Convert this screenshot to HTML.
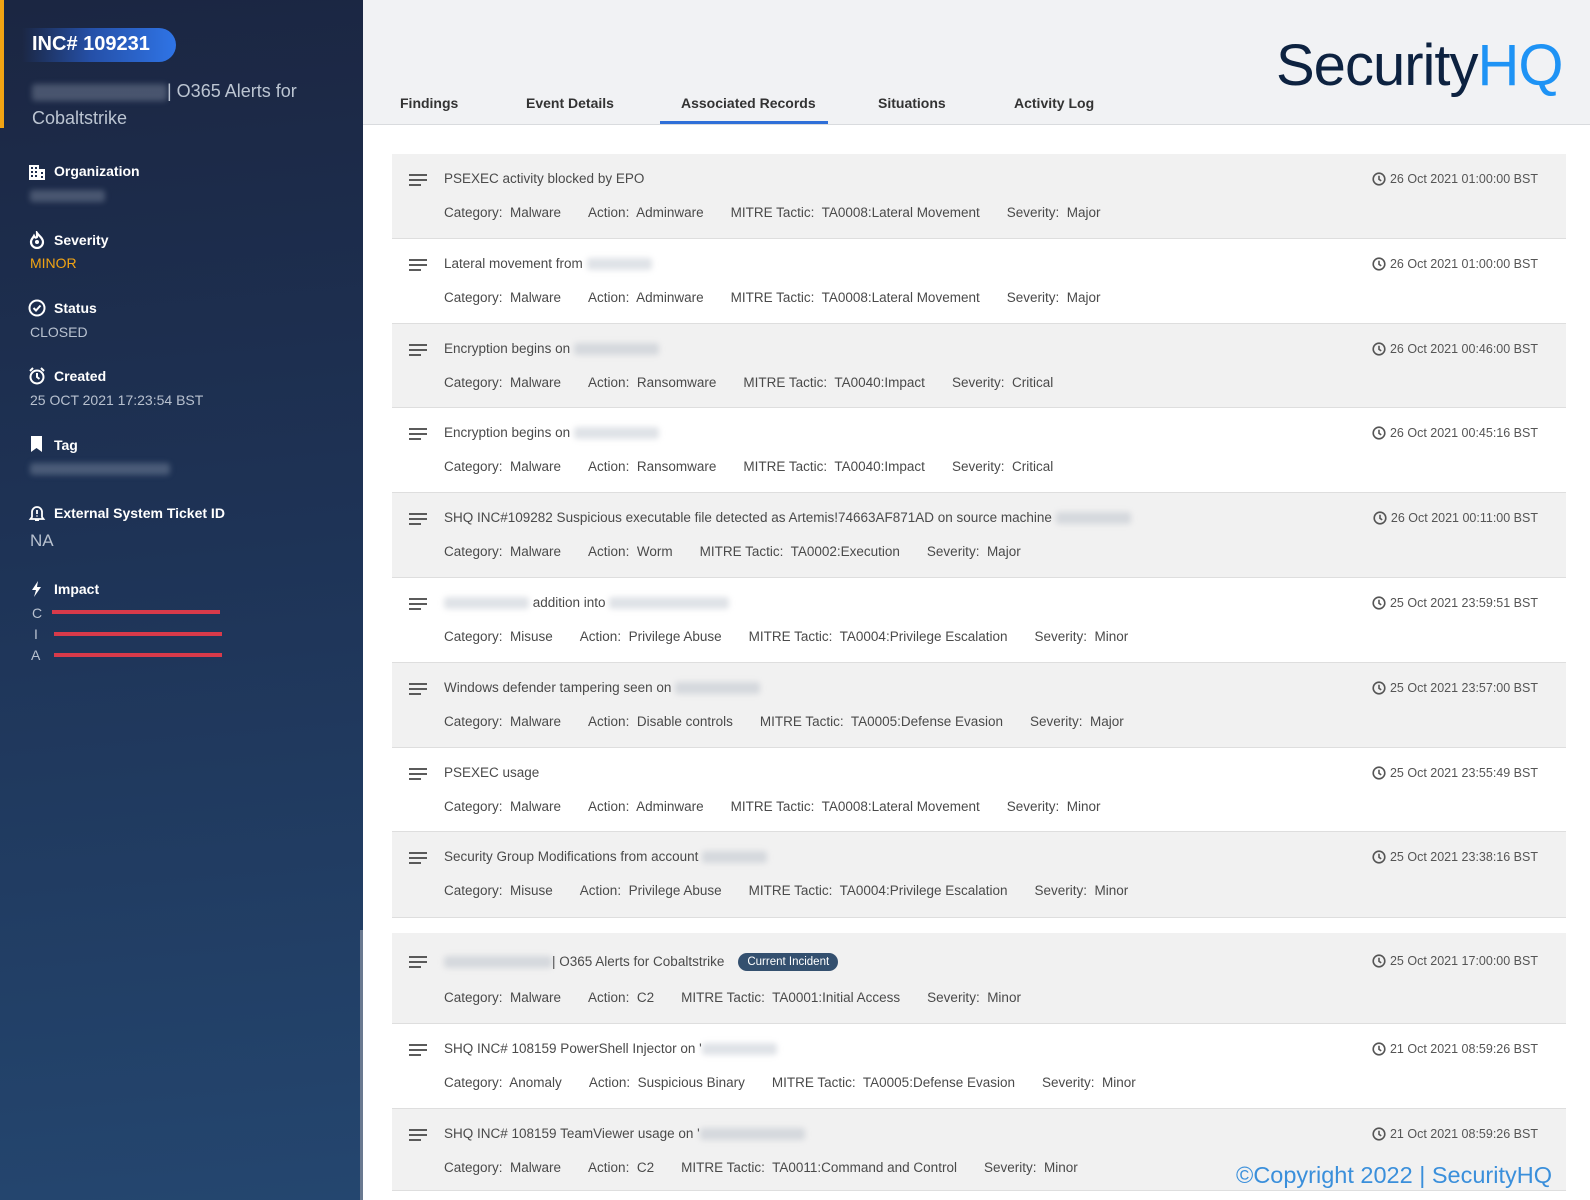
<!DOCTYPE html>
<html><head><meta charset="utf-8"><style>
*{margin:0;padding:0;box-sizing:border-box}
body{width:1590px;height:1200px;overflow:hidden;font-family:"Liberation Sans",sans-serif;background:#fff;position:relative}
#side{position:absolute;left:0;top:0;width:363px;height:1200px;background:linear-gradient(175deg,#1b2642 0%,#1e3356 45%,#24466f 100%)}
.orange{position:absolute;left:0;top:0;width:4px;height:128px;background:#f2a413}
.pill{position:absolute;left:22px;top:28px;width:154px;height:34px;border-radius:0 17px 17px 0;background:linear-gradient(90deg,rgba(27,38,66,0) 0%,#2550a8 45%,#2f74e6 100%)}
.pill span{position:absolute;left:10px;top:5px;color:#fff;font-weight:bold;font-size:20px}
.sub{position:absolute;left:32px;top:78px;color:#bcc5d2;font-size:18px;line-height:27px;width:300px}
.blur{display:inline-block;background:rgba(180,190,205,.3);filter:blur(3px);border-radius:3px;vertical-align:middle}
.lbl{position:absolute;left:54px;color:#fff;font-weight:bold;font-size:14px}
.ico{position:absolute;left:28px;width:18px;height:18px}
.val{position:absolute;left:30px;color:#b8c1cf;font-size:14px}
.bar{position:absolute;height:4px;background:#d83a4a;left:53px;width:168px}
#hdr{position:absolute;left:363px;top:0;right:0;height:125px;background:#f1f2f4;border-bottom:1px solid #d9dbde}
.tab{position:absolute;top:95px;font-size:14px;font-weight:bold;color:#333}
.logo{position:absolute;top:32px;font-size:58px;letter-spacing:-1px;color:#0d2240}
.logo b{font-weight:normal;color:#1e93f5}
.row{position:absolute;left:392px;width:1174px;border-bottom:1px solid #dedede}
.g{background:#f1f1f1}
.row .ham{position:absolute;left:17px;width:18px;height:12px}
.row .t{position:absolute;left:52px;font-size:13.5px;color:#4a4a4a;white-space:nowrap}
.row .c{position:absolute;left:52px;font-size:13.5px;color:#4a4a4a;white-space:nowrap}
.row .c span{margin-right:27px}
.row .ts{position:absolute;right:28px;font-size:12.5px;color:#555;white-space:nowrap}
.row .ts svg{vertical-align:-3px;margin-right:4px}
.badge{display:inline-block;background:#34506f;color:#fff;font-size:11.5px;padding:3px 9px;border-radius:11px;margin-left:14px;vertical-align:1px}
.copy{position:absolute;left:1236px;top:1162px;font-size:23.5px;color:#3a8fdb;white-space:nowrap}
.scroll{position:absolute;left:360px;top:930px;width:3px;height:270px;background:#6a7990}
</style></head><body>
<div id="side">
<div class="orange"></div>
<div class="pill"><span>INC# 109231</span></div>
<div class="sub"><span class="blur" style="width:135px;height:17px"></span>| O365 Alerts for Cobaltstrike</div>

<svg class="ico" style="top:163px" viewBox="0 0 18 18"><path fill="#fff" d="M1 2h10v15H1zM11 6h6v11h-6z"/><g fill="#1d2c4c"><rect x="3" y="4" width="2" height="2"/><rect x="7" y="4" width="2" height="2"/><rect x="3" y="8" width="2" height="2"/><rect x="7" y="8" width="2" height="2"/><rect x="3" y="12" width="2" height="2"/><rect x="7" y="12" width="2" height="2"/><rect x="13" y="9" width="2" height="2"/><rect x="13" y="13" width="2" height="2"/></g></svg>
<div class="lbl" style="top:163px">Organization</div>
<div class="val" style="top:187px"><span class="blur" style="width:75px;height:12px"></span></div>

<svg class="ico" style="top:231px" viewBox="0 0 18 18"><path fill="none" stroke="#fff" stroke-width="2.2" d="M9 2c2 3 6 5 6 9a6 6 0 0 1-12 0c0-3 2-4 3-6 1 2 2 2 3 1z"/><circle cx="9" cy="11" r="2" fill="#fff"/></svg>
<div class="lbl" style="top:232px">Severity</div>
<div class="val" style="top:255px;color:#f2a413">MINOR</div>

<svg class="ico" style="top:299px" viewBox="0 0 18 18"><circle cx="9" cy="9" r="7.5" fill="none" stroke="#fff" stroke-width="2"/><path d="M5.5 9l2.5 2.5 4.5-5" fill="none" stroke="#fff" stroke-width="2"/></svg>
<div class="lbl" style="top:300px">Status</div>
<div class="val" style="top:324px">CLOSED</div>

<svg class="ico" style="top:367px" viewBox="0 0 18 18"><circle cx="9" cy="10" r="6.5" fill="none" stroke="#fff" stroke-width="2"/><path d="M9 6v4l2.5 2M2 4l3-3M16 4l-3-3" fill="none" stroke="#fff" stroke-width="2"/></svg>
<div class="lbl" style="top:368px">Created</div>
<div class="val" style="top:392px">25 OCT 2021 17:23:54 BST</div>

<svg class="ico" style="top:435px" viewBox="0 0 18 18"><path fill="#fff" d="M3 1h11v16l-5.5-4L3 17z"/></svg>
<div class="lbl" style="top:437px">Tag</div>
<div class="val" style="top:460px"><span class="blur" style="width:140px;height:12px"></span></div>

<svg class="ico" style="top:504px" viewBox="0 0 18 18"><path fill="none" stroke="#fff" stroke-width="1.8" d="M4 13V8a5 5 0 0 1 10 0v5l1.5 2h-13z"/><path d="M9 6v4M9 11.5v1" stroke="#fff" stroke-width="1.8"/><path d="M7 16h4" stroke="#fff" stroke-width="2"/></svg>
<div class="lbl" style="top:505px">External System Ticket ID</div>
<div class="val" style="top:531px;font-size:17px">NA</div>

<svg class="ico" style="top:580px" viewBox="0 0 18 18"><path fill="#fff" d="M10 1L4 10h4l-2 7 7-10H9z"/></svg>
<div class="lbl" style="top:581px">Impact</div>
<div class="val" style="top:605px;left:32px">C</div><div class="bar" style="top:610px;left:52px"></div>
<div class="val" style="top:626px;left:34px">I</div><div class="bar" style="top:632px;left:54px"></div>
<div class="val" style="top:647px;left:31px">A</div><div class="bar" style="top:653px;left:54px"></div>
</div>
<div class="scroll"></div>

<div id="hdr">
<div class="tab" style="left:37px">Findings</div>
<div class="tab" style="left:163px">Event Details</div>
<div class="tab" style="left:318px">Associated Records</div>
<div class="tab" style="left:515px">Situations</div>
<div class="tab" style="left:651px">Activity Log</div>
<div style="position:absolute;left:297px;top:121px;width:168px;height:3px;background:#2f6fd8"></div>
<div class="logo" style="left:913px">Security<b>HQ</b></div>
</div>

<div id="rows"></div>
<script>
var clk='<svg width="14" height="14" viewBox="0 0 14 14"><circle cx="7" cy="7" r="5.8" fill="none" stroke="#555" stroke-width="1.6"/><path d="M7 3.8V7.3l2.2 1.6" fill="none" stroke="#555" stroke-width="1.6"/></svg>';
var ham='<svg class="ham" viewBox="0 0 18 12"><path d="M0 1h18M0 6h18M0 11h12" stroke="#444" stroke-width="1.8"/></svg>';
function B(w){return '<span class="blur" style="width:'+w+'px;height:12px;background:rgba(150,160,175,.3)"></span>'}
var R=[
[154,85,1,'PSEXEC activity blocked by EPO','26 Oct 2021 01:00:00 BST',['Malware','Adminware','TA0008:Lateral Movement','Major']],
[239,85,0,'Lateral movement from '+B(65),'26 Oct 2021 01:00:00 BST',['Malware','Adminware','TA0008:Lateral Movement','Major']],
[324,84,1,'Encryption begins on '+B(85),'26 Oct 2021 00:46:00 BST',['Malware','Ransomware','TA0040:Impact','Critical']],
[408,85,0,'Encryption begins on '+B(85),'26 Oct 2021 00:45:16 BST',['Malware','Ransomware','TA0040:Impact','Critical']],
[493,85,1,'SHQ INC#109282 Suspicious executable file detected as Artemis!74663AF871AD on source machine '+B(75),'26 Oct 2021 00:11:00 BST',['Malware','Worm','TA0002:Execution','Major']],
[578,85,0,B(85)+' addition into '+B(120),'25 Oct 2021 23:59:51 BST',['Misuse','Privilege Abuse','TA0004:Privilege Escalation','Minor']],
[663,85,1,'Windows defender tampering seen on '+B(85),'25 Oct 2021 23:57:00 BST',['Malware','Disable controls','TA0005:Defense Evasion','Major']],
[748,84,0,'PSEXEC usage','25 Oct 2021 23:55:49 BST',['Malware','Adminware','TA0008:Lateral Movement','Minor']],
[832,86,1,'Security Group Modifications from account '+B(65),'25 Oct 2021 23:38:16 BST',['Misuse','Privilege Abuse','TA0004:Privilege Escalation','Minor']],
[933,91,1,B(108)+'| O365 Alerts for Cobaltstrike<span class="badge">Current Incident</span>','25 Oct 2021 17:00:00 BST',['Malware','C2','TA0001:Initial Access','Minor']],
[1024,85,0,'SHQ INC# 108159 PowerShell Injector on \''+B(75),'21 Oct 2021 08:59:26 BST',['Anomaly','Suspicious Binary','TA0005:Defense Evasion','Minor']],
[1109,82,1,'SHQ INC# 108159 TeamViewer usage on \''+B(105),'21 Oct 2021 08:59:26 BST',['Malware','C2','TA0011:Command and Control','Minor']]
];
var h='';
R.forEach(function(r){
 var cur=r[1]>88, tt=cur?20:17, ct=cur?57:51;
 h+='<div class="row'+(r[2]?' g':'')+'" style="top:'+r[0]+'px;height:'+r[1]+'px">'+
 ham.replace('class="ham"','class="ham" style="top:'+(tt+3)+'px"')+
 '<div class="t" style="top:'+tt+'px">'+r[3]+'</div>'+
 '<div class="ts" style="top:'+(tt+1)+'px">'+clk+r[4]+'</div>'+
 '<div class="c" style="top:'+ct+'px"><span>Category:&nbsp; '+r[5][0]+'</span><span>Action:&nbsp; '+r[5][1]+'</span><span>MITRE Tactic:&nbsp; '+r[5][2]+'</span><span>Severity:&nbsp; '+r[5][3]+'</span></div></div>';
});
document.getElementById('rows').innerHTML=h;
</script>
<div class="copy">©Copyright 2022 | SecurityHQ</div>
</body></html>
